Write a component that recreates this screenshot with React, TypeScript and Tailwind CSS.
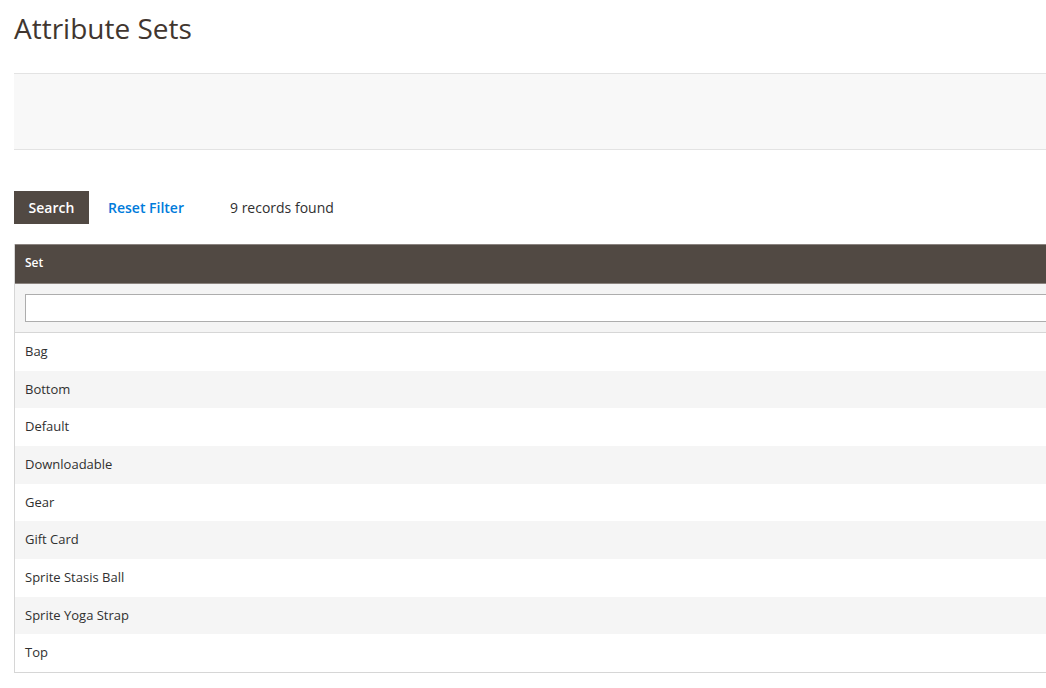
import React from 'react';

const sets = [
  'Bag',
  'Bottom',
  'Default',
  'Downloadable',
  'Gear',
  'Gift Card',
  'Sprite Stasis Ball',
  'Sprite Yoga Strap',
  'Top',
];

const App: React.FC = () => {
  return (
    <div className="min-h-screen w-full overflow-hidden bg-white font-['Open_Sans',sans-serif] text-[#303030]">
      <div className="ml-[14px] w-[1080px]">
        {/* Page title */}
        <h1 className="pt-[10px] text-[28px] leading-[36px] text-[#41362f]">Attribute Sets</h1>

        {/* Empty actions bar */}
        <div className="mt-[27px] h-[77px] border-y border-[#e3e3e3] bg-[#f8f8f8]" />

        {/* Grid actions */}
        <div className="mt-[41px] flex items-center">
          <button className="h-[33px] w-[75px] bg-[#514943] text-[14px] font-semibold text-white">Search</button>
          <span className="ml-[19px] text-[14px] font-semibold text-[#007bdb]">Reset Filter</span>
          <span className="ml-[46px] text-[14px] text-[#303030]">9 records found</span>
        </div>

        {/* Grid */}
        <div className="mt-[20px] border-l border-b border-[#d6d6d6]">
          <div className="flex h-[40px] items-center border-y border-[#8a837f] bg-[#514943] pb-[2px] pl-[10px] text-[12px] font-semibold text-white">
            Set
          </div>
          <div className="flex h-[49px] items-center border-b border-[#d6d6d6] bg-[#f4f4f4] pl-[10px]">
            <input className="h-[28px] w-full border border-[#adadad] bg-white outline-none" />
          </div>
          {sets.map((s, i) => (
            <div
              key={s}
              className={`flex h-[37.67px] items-center pl-[10px] text-[13px] text-[#303030] ${i % 2 === 1 ? 'bg-[#f5f5f5]' : 'bg-white'}`}
            >
              {s}
            </div>
          ))}
        </div>
      </div>
    </div>
  );
};

export default App;
